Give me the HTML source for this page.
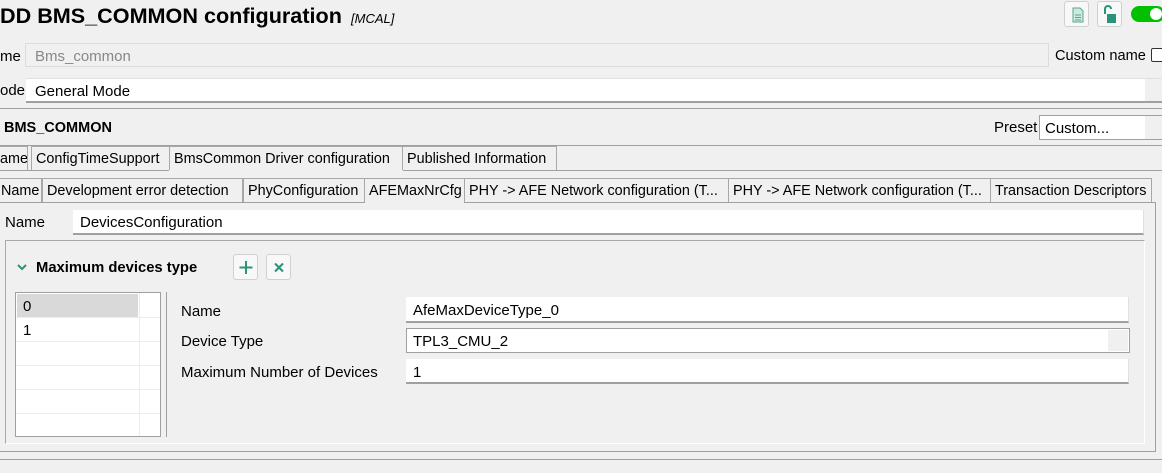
<!DOCTYPE html>
<html><head><style>
*{box-sizing:border-box;margin:0;padding:0}
body{width:1162px;height:473px;background:#f0f0f0;font-family:"Liberation Sans",sans-serif;font-size:15px;color:#000;position:relative;overflow:hidden}
.a{position:absolute;white-space:nowrap}
.in{position:absolute;background:#fff;border-bottom:2px solid #a0a0a0;border-right:1px solid #e0e0e0}
.tab{position:absolute;height:24px;border:1px solid #a8a8a8;border-bottom:none;padding:4px 0 0 4px;white-space:nowrap;font-size:14.4px;overflow:hidden}
.hl{position:absolute;height:1px;background:#a0a0a0}
.btn{position:absolute;width:25px;height:26px;border:1px solid #d0d0d0;border-radius:3px;background:#f8f8f8}
</style></head><body>
<div class="a" style="left:0;top:3px;font-size:21.6px;font-weight:bold">DD BMS_COMMON configuration</div>
<div class="a" style="left:351px;top:11px;font-size:13px;font-style:italic">[MCAL]</div>
<div class="btn" style="left:1064px;top:1px"><svg width="25" height="26"><path d="M8 6h7l3 3v11H8z" fill="#cfe9df" stroke="#55a88a"/><path d="M10 13h6M10 15.5h6M10 18h6" stroke="#55a88a"/></svg></div>
<div class="btn" style="left:1097px;top:1px"><svg width="25" height="26"><path d="M7 12V7a3 3 0 0 1 6 0" fill="none" stroke="#2a9478" stroke-width="2"/><rect x="9" y="12" width="9" height="9" fill="#2a9478"/></svg></div>
<div class="a" style="left:1131px;top:6px;width:34px;height:16px;border-radius:8px;background:#00c000"><div style="position:absolute;left:19px;top:2px;width:12px;height:12px;border-radius:6px;background:#fff"></div></div>

<div class="a" style="left:0;top:48px">me</div>
<div class="a" style="left:25px;top:43px;width:1024px;height:24px;border:1px solid #dcdcdc;color:#888;padding:4px 0 0 9px">Bms_common</div>
<div class="a" style="left:1055px;top:48px;font-size:14.6px">Custom name</div>
<div class="a" style="left:1151px;top:48px;width:14px;height:14px;border:1px solid #333;border-radius:2px;background:#fff"></div>

<div class="a" style="left:0;top:82px">ode</div>
<div class="in" style="left:26px;top:78px;width:1140px;height:25px;padding:4px 0 0 9px;border-top:1px solid #e0e0e0">General Mode</div>
<div class="a" style="left:1145px;top:79px;width:20px;height:22px;background:#f0f0f0"></div>
<div class="hl" style="left:0;top:108px;width:1162px"></div>

<div class="a" style="left:4px;top:120px;font-weight:bold;font-size:14.5px">BMS_COMMON</div>
<div class="a" style="left:994px;top:119px">Preset</div>
<div class="a" style="left:1039px;top:115px;width:130px;height:25px;background:#fff;border:1px solid #a0a0a0;padding:4px 0 0 5px">Custom...</div>
<div class="a" style="left:1145px;top:116px;width:20px;height:23px;background:#f0f0f0"></div>
<div class="hl" style="left:0;top:145px;width:1162px"></div>

<div class="tab" style="left:-5px;top:146px;width:33px">ame</div>
<div class="tab" style="left:31px;top:146px;width:139px">ConfigTimeSupport</div>
<div class="tab" style="left:169px;top:146px;width:234px;background:#f0f0f0">BmsCommon Driver configuration</div>
<div class="tab" style="left:402px;top:146px;width:155px">Published Information</div>
<div class="hl" style="left:0;top:170px;width:169px"></div>
<div class="hl" style="left:403px;top:170px;width:759px"></div>

<div class="tab" style="left:-4px;top:178px;width:46px">Name</div>
<div class="tab" style="left:42px;top:178px;width:201px">Development error detection</div>
<div class="tab" style="left:243px;top:178px;width:122px">PhyConfiguration</div>
<div class="tab" style="left:364px;top:178px;width:101px">AFEMaxNrCfg</div>
<div class="tab" style="left:464px;top:178px;width:265px">PHY -&gt; AFE Network configuration (T...</div>
<div class="tab" style="left:728px;top:178px;width:263px">PHY -&gt; AFE Network configuration (T...</div>
<div class="tab" style="left:990px;top:178px;width:162px">Transaction Descriptors</div>
<div class="hl" style="left:0;top:202px;width:365px"></div>
<div class="hl" style="left:464px;top:202px;width:692px"></div>
<div class="a" style="left:1155px;top:202px;width:1px;height:250px;background:#a0a0a0"></div>
<div class="hl" style="left:0;top:451px;width:1156px"></div>
<div class="hl" style="left:0;top:459px;width:1162px"></div>

<div class="a" style="left:5px;top:214px">Name</div>
<div class="in" style="left:73px;top:210px;width:1071px;height:25px;padding:4px 0 0 7px">DevicesConfiguration</div>

<div class="a" style="left:5px;top:240px;width:1140px;height:204px;border:1px solid #a8a8a8;border-right-color:#fff;border-bottom-color:#fff"></div>
<svg class="a" style="left:16px;top:262px" width="12" height="10"><path d="M2 3l4 4 4-4" fill="none" stroke="#2a9478" stroke-width="2"/></svg>
<div class="a" style="left:36px;top:260px;font-weight:bold;font-size:14.8px">Maximum devices type</div>
<div class="btn" style="left:233px;top:254px"><svg width="25" height="26"><path d="M12 6v13M5.5 12.5h13" stroke="#2a9478" stroke-width="2"/></svg></div>
<div class="btn" style="left:266px;top:254px"><svg width="25" height="26"><path d="M8 8.5l8 8M16 8.5l-8 8" stroke="#2a9478" stroke-width="2"/></svg></div>

<div class="a" style="left:15px;top:292px;width:146px;height:145px;border:1px solid #a0a0a0;background:#fff">
<div class="a" style="left:1px;top:1px;width:121px;height:23px;background:#d9d9d9;padding:4px 0 0 6px">0</div>
<div class="a" style="left:1px;top:25px;padding:4px 0 0 6px">1</div>
<div class="a" style="left:0;top:24px;width:144px;height:1px;background:#ececec"></div>
<div class="a" style="left:0;top:48px;width:144px;height:1px;background:#ececec"></div>
<div class="a" style="left:0;top:72px;width:144px;height:1px;background:#ececec"></div>
<div class="a" style="left:0;top:96px;width:144px;height:1px;background:#ececec"></div>
<div class="a" style="left:0;top:120px;width:144px;height:1px;background:#ececec"></div>
<div class="a" style="left:123px;top:0;width:1px;height:143px;background:#ececec"></div>
</div>
<div class="a" style="left:166px;top:292px;width:1px;height:145px;background:#a0a0a0"></div>

<div class="a" style="left:181px;top:303px">Name</div>
<div class="a" style="left:181px;top:333px">Device Type</div>
<div class="a" style="left:181px;top:364px">Maximum Number of Devices</div>
<div class="in" style="left:406px;top:297px;width:723px;height:26px;padding:5px 0 0 7px">AfeMaxDeviceType_0</div>
<div class="a" style="left:406px;top:328px;width:724px;height:25px;background:#fff;border:1px solid #a0a0a0;padding:4px 0 0 6px">TPL3_CMU_2</div>
<div class="a" style="left:1108px;top:330px;width:20px;height:21px;background:#f0f0f0"></div>
<div class="in" style="left:406px;top:359px;width:723px;height:25px;padding:5px 0 0 7px">1</div>
</body></html>
